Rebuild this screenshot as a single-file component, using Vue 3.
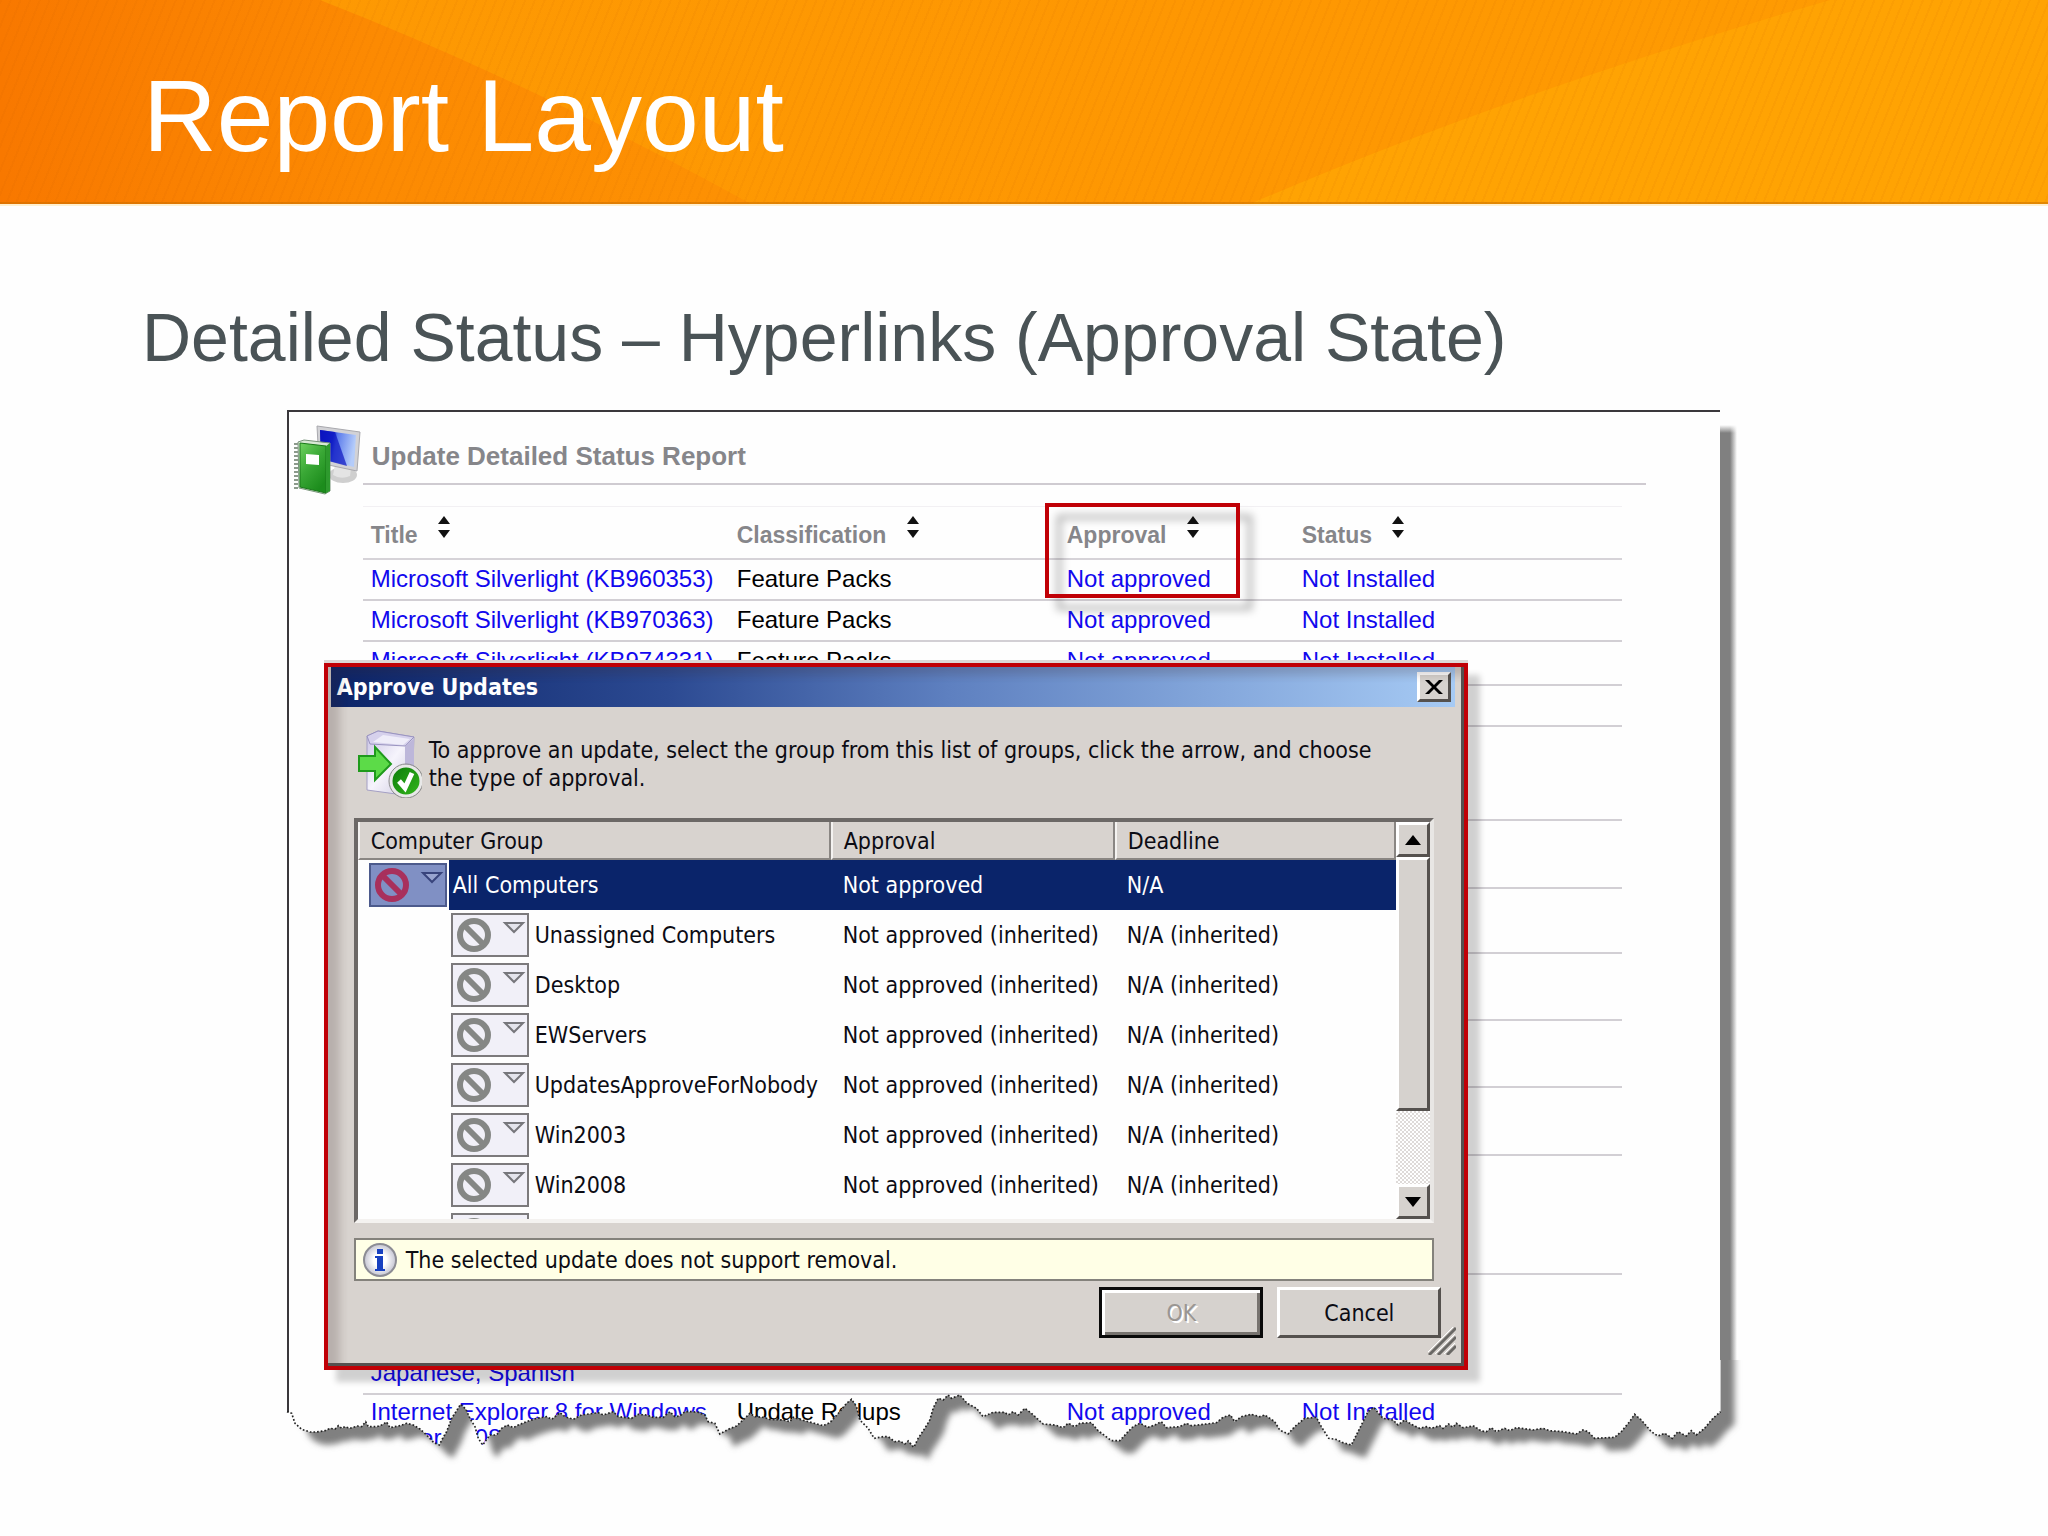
<script setup>
const updates = [
  { title: 'Microsoft Silverlight (KB960353)', kind: 'Feature Packs', height: 41 },
  { title: 'Microsoft Silverlight (KB970363)', kind: 'Feature Packs', height: 41 },
  { title: 'Microsoft Silverlight (KB974331)', kind: 'Feature Packs', height: 44 },
  { height: 41 },
  { height: 94 },
  { height: 68 },
  { height: 65 },
  { height: 67 },
  { height: 67 },
  { height: 68 },
  { height: 119 },
  { title: 'Japanese, Spanish', height: 120, continued: true },
  { title: 'Internet Explorer 8 for Windows Server 2008', kind: 'Update Rollups', height: 67 },
]

const columns = ['Title', 'Classification', 'Approval', 'Status']

const groups = [
  'Unassigned Computers',
  'Desktop',
  'EWServers',
  'UpdatesApproveForNobody',
  'Win2003',
  'Win2008',
]

// Torn lower edge of the sheet, in thirds of a pixel, as three runs from left to right.
const runs = [
  [-51, '51,155 65,160 75,190 95,208 120,216 140,216 165,212 180,205 195,207 205,197 215,205 225,200 240,205 262,198 275,200 287,185 295,200 320,200 335,195 350,186 360,203 390,197 410,190 430,195 450,207 470,225 492,248 508,255 518,235 530,215 545,175 558,155 572,133 588,148 600,175 615,200 625,235 638,255 660,225 680,225 695,205 712,195 730,203 745,195 770,185 800,175 830,170 845,178 870,158 885,170 910,178 935,165 985,158 1000,165 1030,155 1045,170 1085,175 1105,163 1130,165 1150,172 1180,172 1200,155 1215,170 1230,168 1245,155 1265,155 1285,157 1305,165 1315,185 1335,190 1350,222 1375,208 1400,198 1425,175 1440,160 1455,170 1480,172'],
  [1419, '30,178 70,180 90,185 100,172 120,178 145,185 190,197 210,188 240,155 260,130 275,118 290,140 300,180 325,205 343,235 370,230 385,230 405,245 420,243 435,252 445,243 462,262 475,235 495,205 510,180 520,145 535,115 550,120 565,105 575,115 600,105 622,130 650,145 670,170 700,157 735,157 745,165 760,155 775,165 795,145 815,160 850,192 885,195 910,203 925,190 945,200 960,190 995,188 1015,212 1055,242 1080,242 1105,215 1120,200 1140,190 1165,202 1185,195 1205,185 1220,203 1260,200 1280,190 1295,197 1340,192 1370,188 1390,172 1412,165 1425,185 1445,170 1465,165'],
  [2889, '5,163 30,170 45,165 75,185 90,210 115,222 135,200 165,175 200,172 215,200 237,235 258,238 280,248 305,255 320,225 335,195 355,155 372,142 385,158 400,175 430,180 445,195 465,180 485,193 510,205 530,200 545,205 570,197 580,205 597,192 610,202 620,190 640,203 672,198 695,213 710,215 725,203 740,215 765,205 780,212 800,203 850,210 880,205 900,212 940,215 980,222 1000,210 1015,215 1035,235 1095,232 1115,215 1140,185 1155,163 1175,180 1205,215 1225,228 1245,220 1268,235 1285,215 1310,228 1325,212 1340,225 1365,205 1390,175 1413,155'],
]
const edge = runs
  .flatMap(([shift, list]) =>
    list.split(' ').map((pair) => {
      const [x, y] = pair.split(',').map(Number)
      return `${x + shift},${y}`
    }),
  )
  .join(' ')
const below = `-12,155 ${edge} 4302,0 4440,0 4440,330 -12,330`
const paper = `0,-200 ${edge} 4302,-200`
</script>

<template>
  <div class="slide">
    <header class="banner">
      <svg class="facets" viewBox="0 0 2048 204" preserveAspectRatio="none" aria-hidden="true">
        <defs>
          <linearGradient id="facetLeft" x1="0" y1="0" x2="1" y2="0">
            <stop offset="0" stop-color="#f87800" />
            <stop offset="0.5" stop-color="#fc8a02" />
            <stop offset="1" stop-color="#fd9103" />
          </linearGradient>
        </defs>
        <path d="M0 0H320Q525 80 751 204H0Z" fill="url(#facetLeft)" />
        <path d="M1830 0Q1500 96 1250 204H2048V0Z" fill="#ffa303" />
      </svg>
      <h1>Report Layout</h1>
    </header>

    <main>
      <h2 class="subtitle">Detailed Status – Hyperlinks (Approval State)</h2>

      <section class="sheet">
        <div class="report-head">
          <svg class="report-icon" viewBox="0 0 68 70" aria-hidden="true">
            <defs>
              <linearGradient id="screen" x1="0" y1="0" x2="1" y2="0.2">
                <stop offset="0" stop-color="#0a10b8" />
                <stop offset="0.38" stop-color="#1c34d4" />
                <stop offset="0.5" stop-color="#5c7cec" />
                <stop offset="1" stop-color="#b4ccfa" />
              </linearGradient>
              <linearGradient id="book" x1="0" y1="0" x2="0.6" y2="1">
                <stop offset="0" stop-color="#6fd35f" />
                <stop offset="0.5" stop-color="#3aa836" />
                <stop offset="1" stop-color="#1c8c1c" />
              </linearGradient>
            </defs>
            <ellipse cx="50" cy="50" rx="14" ry="8" fill="#cfcfcf" />
            <path d="M42 40L58 43L57 51Q48 55 40 50Z" fill="#e4e4e4" />
            <path d="M24 1L67 7L64 46L26 38Z" fill="#d2d2d6" stroke="#a9a9ae" />
            <path d="M27 5L63 10L61 42L28 34Z" fill="url(#screen)" />
            <path d="M27 5L42 7L54 41L28 34Z" fill="#0c14c0" opacity="0.7" />
            <path d="M5 17L11 15L37 18V66L32 69L6 63Z" fill="#d8e8d4" stroke="#78947a" />
            <path d="M7 18L33 21V68L7 62Z" fill="url(#book)" stroke="#187818" />
            <path d="M33 21L37 18V66L33 68Z" fill="#2e9a2e" />
            <path d="M13 29L26 30V40L13 39Z" fill="#fff" />
            <path d="M3 18V64" stroke="#8c9a8c" stroke-width="4" stroke-dasharray="2 2" />
          </svg>
          <h3>Update Detailed Status Report</h3>
        </div>

        <table class="updates">
          <colgroup>
            <col class="c-title" />
            <col class="c-kind" />
            <col class="c-approval" />
            <col />
          </colgroup>
          <thead>
            <tr>
              <th v-for="name in columns" :key="name" scope="col">
                {{ name }}
                <svg class="sort" viewBox="0 0 14 24" aria-hidden="true">
                  <path d="M7 1L13 9H1ZM1 15H13L7 23Z" />
                </svg>
                <span v-if="name === 'Approval'" class="callout"></span>
              </th>
            </tr>
          </thead>
          <tbody>
            <tr
              v-for="(row, i) in updates"
              :key="i"
              :class="{ continued: row.continued }"
              :style="{ height: row.height + 'px' }"
            >
              <td><a v-if="row.title" href="#">{{ row.title }}</a></td>
              <td>{{ row.kind }}</td>
              <td><a v-if="row.kind" href="#">Not approved</a></td>
              <td><a v-if="row.kind" href="#">Not Installed</a></td>
            </tr>
          </tbody>
        </table>

        <svg class="tear" viewBox="0 0 4302 330" preserveAspectRatio="none" aria-hidden="true">
          <defs>
            <clipPath id="belowEdge"><polygon :points="below" /></clipPath>
            <filter id="soft" x="-5%" y="-20%" width="110%" height="150%">
              <feGaussianBlur stdDeviation="9" />
            </filter>
          </defs>
          <polygon :points="below" fill="#fefefe" />
          <g clip-path="url(#belowEdge)">
            <polygon :points="paper" fill="#808080" filter="url(#soft)" transform="translate(42 38)" />
          </g>
          <polyline
            :points="edge"
            fill="none"
            stroke="#222"
            stroke-width="5"
            stroke-dasharray="5 6"
          />
        </svg>

        <div class="dialog" role="dialog" aria-labelledby="dialog-title">
          <div class="titlebar">
            <span id="dialog-title">Approve Updates</span>
            <button class="close" type="button" aria-label="Close">
              <svg viewBox="0 0 20 16" aria-hidden="true">
                <path d="M1 1H5L10 6L15 1H19L12 8L19 15H15L10 10L5 15H1L8 8Z" />
              </svg>
            </button>
          </div>

          <div class="body">
            <div class="intro">
              <svg class="approve-icon" viewBox="0 0 64 68" aria-hidden="true">
                <defs>
                  <linearGradient id="box" x1="0" y1="0" x2="1" y2="1">
                    <stop offset="0" stop-color="#c9c3e4" />
                    <stop offset="0.5" stop-color="#f6f4fc" />
                    <stop offset="1" stop-color="#c8c4dc" />
                  </linearGradient>
                  <linearGradient id="ball" x1="0" y1="0" x2="1" y2="1">
                    <stop offset="0" stop-color="#0a7a0a" />
                    <stop offset="1" stop-color="#36b81c" />
                  </linearGradient>
                </defs>
                <path d="M9 6L20 1L56 7L54 58L38 64L9 60Z" fill="url(#box)" stroke="#a49fc4" />
                <path d="M9 6L20 1L56 7L47 16L12 14Z" fill="#d6d1ec" stroke="#9a94c0" />
                <path d="M15 12L25 5L52 9L45 15Z" fill="#efedf9" />
                <path d="M47 16L56 8V50L47 60Z" fill="#bdb7da" />
                <path d="M1 26H17V17L33 34L17 50V41H1Z" fill="#5cdb48" stroke="#1f9a1c" stroke-width="2" />
                <circle cx="48" cy="51" r="15" fill="url(#ball)" stroke="#e8e8e8" stroke-width="3" />
                <circle cx="48" cy="51" r="17" fill="none" stroke="#8a8a8a" />
                <path d="M41 51L47 58L54 43" fill="none" stroke="#fff" stroke-width="5" />
              </svg>
              <p>
                To approve an update, select the group from this list of groups, click the arrow, and choose
                the type of approval.
              </p>
            </div>

            <div class="listbox">
              <div class="viewport">
                <table class="groups">
                  <colgroup>
                    <col class="g-name" />
                    <col class="g-approval" />
                    <col />
                  </colgroup>
                  <thead>
                    <tr>
                      <th scope="col">Computer Group</th>
                      <th scope="col">Approval</th>
                      <th scope="col">Deadline</th>
                    </tr>
                  </thead>
                  <tbody>
                    <tr class="selected">
                      <td>
                        <div class="name">
                          <button class="state on" type="button" aria-label="Approval for All Computers">
                            <svg viewBox="0 0 74 40" aria-hidden="true">
                              <circle cx="21" cy="20" r="14" />
                              <path class="bar" d="M11 10L31 30" />
                              <path class="arrow" d="M52 8H70L61 17Z" />
                            </svg>
                          </button>
                          <span class="label">All Computers</span>
                        </div>
                      </td>
                      <td>Not approved</td>
                      <td>N/A</td>
                    </tr>
                    <tr v-for="group in groups" :key="group">
                      <td>
                        <div class="name child">
                          <button class="state" type="button" :aria-label="'Approval for ' + group">
                            <svg viewBox="0 0 74 40" aria-hidden="true">
                              <circle cx="21" cy="20" r="14" />
                              <path class="bar" d="M11 10L31 30" />
                              <path class="arrow" d="M52 8H70L61 17Z" />
                            </svg>
                          </button>
                          <span>{{ group }}</span>
                        </div>
                      </td>
                      <td>Not approved (inherited)</td>
                      <td>N/A (inherited)</td>
                    </tr>
                    <tr>
                      <td>
                        <div class="name child">
                          <button class="state" type="button" aria-label="Approval">
                            <svg viewBox="0 0 74 40" aria-hidden="true">
                              <circle cx="21" cy="20" r="14" />
                            </svg>
                          </button>
                        </div>
                      </td>
                      <td></td>
                      <td></td>
                    </tr>
                  </tbody>
                </table>
              </div>
              <div class="scrollbar">
                <button type="button" class="raised" aria-label="Scroll up">
                  <svg viewBox="0 0 16 10" aria-hidden="true"><path d="M8 0L16 10H0Z" /></svg>
                </button>
                <div class="thumb raised"></div>
                <div class="track"></div>
                <button type="button" class="raised" aria-label="Scroll down">
                  <svg viewBox="0 0 16 10" aria-hidden="true"><path d="M0 0H16L8 10Z" /></svg>
                </button>
              </div>
            </div>

            <div class="notice">
              <svg viewBox="0 0 36 36" aria-hidden="true">
                <defs>
                  <radialGradient id="bubble">
                    <stop offset="0.4" stop-color="#fff" />
                    <stop offset="1" stop-color="#c4c4d2" />
                  </radialGradient>
                </defs>
                <circle cx="18" cy="18" r="16" fill="url(#bubble)" stroke="#8c8c94" stroke-width="2" />
                <path d="M15 7H21V12H15ZM13 14H21V27H23V29H13V27H15V16H13Z" fill="#1740c0" />
              </svg>
              <span>The selected update does not support removal.</span>
            </div>

            <div class="actions">
              <button type="button" class="ok" disabled>OK</button>
              <button type="button" class="cancel">Cancel</button>
            </div>
          </div>

          <svg class="grip" viewBox="0 0 28 28" aria-hidden="true">
            <path d="M1 28L28 1M10 28L28 10M19 28L28 19" stroke="#6a6865" stroke-width="3" />
            <path d="M-2 27L27 -2M7 27L27 7M16 27L27 16" stroke="#fff" stroke-width="1" />
          </svg>
        </div>
      </section>
    </main>
  </div>
</template>

<style>
body {
  margin: 0;
  background: #fefefe;
}
</style>

<style scoped>
.slide {
  position: relative;
  min-height: 100vh;
  overflow: hidden;
  background: #fefefe;
  font-family: 'Liberation Sans', Arial, sans-serif;
}
h1,
h2,
h3,
p {
  margin: 0;
  font-weight: 400;
}
button {
  padding: 0;
  font: inherit;
  color: inherit;
}

.banner {
  position: relative;
  height: 204px;
  box-sizing: border-box;
  padding: 57px 144px 0 143px;
  background: linear-gradient(90deg, #fd9a03, #fe9702 60%, #fe9c02);
  box-shadow: 0 2px 0 #fff0d0;
}
.banner::after {
  content: '';
  position: absolute;
  inset: 0;
  background: repeating-linear-gradient(112deg, rgba(190, 80, 0, 0.06) 0 2px, transparent 2px 9px);
  border-bottom: 2px solid rgba(200, 110, 0, 0.5);
  box-sizing: border-box;
}
.facets {
  position: absolute;
  inset: 0;
  width: 100%;
  height: 100%;
}
h1 {
  position: relative;
  z-index: 1;
  color: #fff;
  font-size: 102px;
  line-height: 118px;
}
.subtitle {
  padding: 94px 142px 0;
  color: #4a5356;
  font-size: 68px;
  line-height: 78px;
}

.sheet {
  position: relative;
  width: 70%;
  height: 1060px;
  box-sizing: border-box;
  margin: 34px 0 0 14%;
  border-top: 2px solid #3a383c;
  border-left: 2px solid #3a383c;
}
.sheet::after {
  content: '';
  position: absolute;
  top: 13px;
  left: 100%;
  width: 17px;
  height: 935px;
  background:
    linear-gradient(#fefefe, transparent 8px),
    linear-gradient(90deg, #808080 10px, #c6c6c6 14px, #fefefe);
}
.report-head {
  display: flex;
  padding: 13px 0 0 4px;
  gap: 2px;
}
.report-icon {
  width: 68px;
  height: 70px;
}
h3 {
  flex: 1;
  height: 60px;
  box-sizing: border-box;
  margin-right: 74px;
  padding: 16px 0 0 9px;
  border-bottom: 2px solid #cfcbd1;
  color: #86868a;
  font-size: 26px;
  line-height: 30px;
  font-weight: 700;
}
.updates {
  width: calc(100% - 172px);
  margin: 11px 98px 0 74px;
  border-collapse: collapse;
  table-layout: fixed;
  font-size: 24px;
  line-height: 26px;
  color: #000;
}
.c-title {
  width: 366px;
}
.c-kind {
  width: 330px;
}
.c-approval {
  width: 235px;
}
.updates th {
  position: relative;
  height: 52px;
  box-sizing: border-box;
  padding: 8px 0 8px 8px;
  border-top: 1px solid #f2f0f3;
  border-bottom: 2px solid #d6d3d8;
  vertical-align: top;
  text-align: left;
  font-size: 23px;
  font-weight: 700;
  color: #86868a;
  white-space: nowrap;
}
.updates td {
  padding: 6px 0 0 8px;
  border-bottom: 2px solid #d2cfd4;
  vertical-align: top;
}
.updates tr:last-child td {
  padding-top: 4px;
  border: 0;
}
.updates .continued td {
  padding: 0 0 7px 8px;
  vertical-align: bottom;
}
.updates a {
  color: #1208ee;
  text-decoration: none;
}
.sort {
  width: 14px;
  height: 24px;
  margin: 0 0 4px 13px;
  vertical-align: baseline;
  fill: #111;
}
.callout {
  position: absolute;
  z-index: 1;
  top: -4px;
  left: -14px;
  width: 195px;
  height: 95px;
  box-sizing: border-box;
  border: 4px solid #c00006;
  filter: drop-shadow(12px 12px 4px rgba(0, 0, 0, 0.35));
}
.tear {
  position: absolute;
  top: 948px;
  left: -2px;
  width: calc(100% + 2px);
  height: 110px;
  overflow: visible;
}

.dialog {
  position: absolute;
  top: 251px;
  left: 35px;
  right: 252px;
  box-sizing: border-box;
  border: 4px solid #c00006;
  background: #d8d3cf;
  box-shadow:
    0 -3px 0 #dcd8d6,
    12px 12px 6px rgba(0, 0, 0, 0.18);
  font-family: 'DejaVu Sans Condensed', 'Noto Sans', Tahoma, sans-serif;
  font-size: 23px;
  line-height: 28px;
  color: #0c0c14;
}
.dialog::after {
  content: '';
  position: absolute;
  inset: 0;
  border: solid #55504f;
  border-width: 0 3px 3px 0;
  box-shadow: inset 12px 8px 8px rgba(60, 40, 40, 0.2);
  pointer-events: none;
}
.titlebar {
  display: flex;
  align-items: center;
  justify-content: space-between;
  height: 40px;
  box-sizing: border-box;
  margin: 0 9px 0 3px;
  padding: 0 4px 0 6px;
  background: linear-gradient(90deg, #0c2468, #2c4a92 30%, #5e80c0 55%, #a6caf4);
  color: #fff;
  font-weight: 700;
}
.close,
.raised,
.cancel {
  background: #d6d2ce;
  border: 3px solid;
  border-color: #fff #55514e #55514e #fff;
}
.close {
  display: grid;
  place-items: center;
  width: 34px;
  height: 30px;
}
.close svg {
  width: 20px;
  height: 16px;
}
.body {
  padding: 23px 30px 28px 26px;
}
.intro {
  display: flex;
  gap: 7px;
}
.approve-icon {
  flex: none;
  width: 64px;
  height: 68px;
  margin-left: 4px;
}
.intro p {
  padding-top: 6px;
  max-width: 980px;
}
.listbox {
  display: flex;
  height: 405px;
  box-sizing: border-box;
  margin-top: 20px;
  border: 4px solid;
  border-color: #6c6866 #e8e6e4 #f4f2f0 #6c6866;
  background: #fefefe;
}
.viewport {
  flex: 1;
  overflow: hidden;
}
.groups {
  width: 100%;
  border-collapse: separate;
  border-spacing: 0;
  table-layout: fixed;
}
.g-name {
  width: 473px;
}
.g-approval {
  width: 284px;
}
.groups th {
  height: 38px;
  box-sizing: border-box;
  padding: 2px 0 0 11px;
  border: solid;
  border-width: 0 2px 2px 2px;
  border-color: #fff #8a8683 #8a8683 #f4f2f0;
  background: #d8d3cf;
  text-align: left;
  font-weight: 400;
}
.groups td {
  height: 50px;
  padding: 0 0 0 12px;
  white-space: nowrap;
}
.groups td:first-child {
  padding: 0;
}
.name {
  display: flex;
  align-items: center;
  gap: 6px;
  height: 50px;
  padding-left: 93px;
}
.selected td {
  background: #0a246a;
  color: #fff;
}
.selected td:first-child {
  background: none;
}
.selected .name {
  gap: 2px;
  padding-left: 11px;
}
.selected .label {
  flex: 1;
  padding-left: 4px;
  background: #0a246a;
  line-height: 50px;
}
.state {
  width: 78px;
  height: 44px;
  border: 2px solid #7c7a7c;
  background: #f1f0f8;
}
.state svg {
  display: block;
  width: 74px;
  height: 40px;
  fill: none;
  stroke: #858785;
  stroke-width: 6;
}
.state .arrow {
  fill: #e4e4ec;
  stroke: #77777c;
  stroke-width: 2;
}
.on {
  background: #8090c4;
  border-color: #4c5a8c;
}
.on svg {
  stroke: #a8305c;
}
.on .arrow {
  fill: #98a4d0;
  stroke: #38447c;
}
.scrollbar {
  display: flex;
  flex-direction: column;
  width: 34px;
}
.scrollbar button {
  display: grid;
  place-items: center;
  height: 35px;
}
.scrollbar svg {
  width: 16px;
  height: 10px;
}
.thumb {
  height: 254px;
  box-sizing: border-box;
}
.track {
  flex: 1;
  background: repeating-conic-gradient(#dedad8 0 25%, #fff 0 50%) 0 0 / 4px 4px;
}
.notice {
  display: flex;
  align-items: center;
  gap: 8px;
  height: 43px;
  box-sizing: border-box;
  margin-top: 15px;
  padding-left: 6px;
  border: 2px solid #84827c;
  background: #ffffe6;
}
.notice svg {
  width: 36px;
  height: 36px;
}
.actions {
  display: flex;
  justify-content: flex-end;
  gap: 14px;
  margin: 6px -7px 0 0;
}
.actions button {
  width: 164px;
  height: 51px;
}
.ok {
  border: 3px solid #0a0a0a;
  background: #d6d2ce;
  box-shadow:
    inset 3px 3px 0 #fff,
    inset -3px -3px 0 #77736f;
  color: #9a9692;
  text-shadow: 2px 2px 0 #fff;
}
.grip {
  position: absolute;
  right: 8px;
  bottom: 11px;
  width: 28px;
  height: 28px;
}
</style>
